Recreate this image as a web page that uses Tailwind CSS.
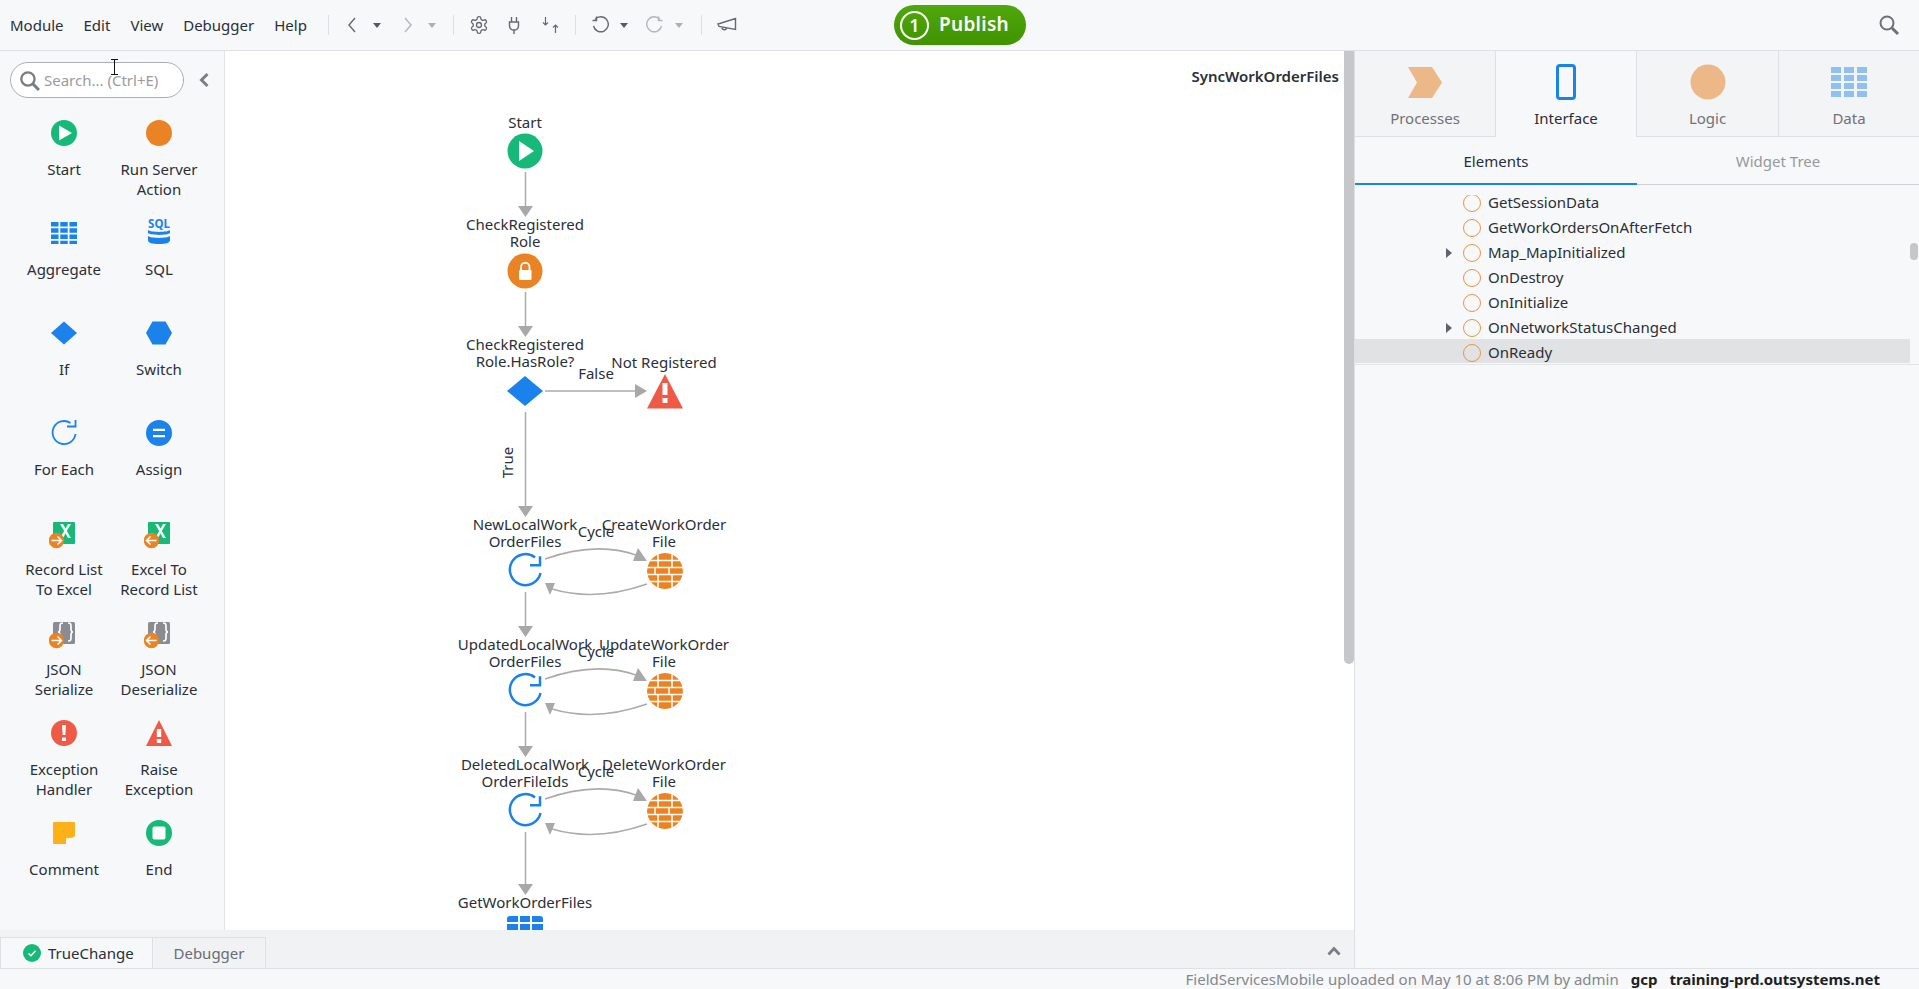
<!DOCTYPE html>
<html lang="en">
<head>
<meta charset="utf-8">
<title>Service Studio</title>
<script src="https://cdn.jsdelivr.net/npm/@tailwindcss/browser@4"></script>
</head>
<body class="font-['Noto_Sans',sans-serif] text-[15px] text-[#2a2f38] overflow-hidden">
<div class="flex flex-col w-[1919px] h-[989px] bg-[#f7f8fa]">

  <!-- top bar -->
  <header class="flex items-center h-[51px] shrink-0 border-b border-[#dfe0e3] pl-[10px] bg-[#f7f8fa]">
    <nav class="flex items-center gap-[20px] w-[318px]">
      <span>Module</span><span>Edit</span><span>View</span><span>Debugger</span><span>Help</span>
    </nav>
    <div class="w-px h-[20px] bg-[#dfe0e3]"></div>
    <svg class="ml-[17px] w-[12px] h-[18px]" viewBox="0 0 12 18" fill="none" stroke="#666a70" stroke-width="1.4"><path d="M9 2 3 9l6 7"/></svg>
    <svg class="ml-[15px] w-[8px] h-[5px]" viewBox="0 0 8 5"><path d="M0 0h8L4 5z" fill="#555a62"/></svg>
    <svg class="ml-[21px] w-[12px] h-[18px]" viewBox="0 0 12 18" fill="none" stroke="#b4b6ba" stroke-width="1.4"><path d="m3 2 6 7-6 7"/></svg>
    <svg class="ml-[14px] w-[8px] h-[5px]" viewBox="0 0 8 5"><path d="M0 0h8L4 5z" fill="#aeb0b4"/></svg>
    <div class="ml-[17px] w-px h-[20px] bg-[#dfe0e3]"></div>
    <svg class="ml-[15px] w-[20px] h-[20px]" viewBox="0 0 24 24" fill="none" stroke="#666a70" stroke-width="1.6"><path d="M12.220 2h-.44a2 2 0 0 0-2 2v.18a2 2 0 0 1-1 1.730l-.43.25a2 2 0 0 1-2 0l-.15-.08a2 2 0 0 0-2.730.73l-.22.38a2 2 0 0 0 .73 2.730l.15.1a2 2 0 0 1 1 1.720v.51a2 2 0 0 1-1 1.740l-.15.09a2 2 0 0 0-.73 2.730l.22.38a2 2 0 0 0 2.730.73l.15-.08a2 2 0 0 1 2 0l.43.25a2 2 0 0 1 1 1.730V20a2 2 0 0 0 2 2h.44a2 2 0 0 0 2-2v-.18a2 2 0 0 1 1-1.730l.43-.25a2 2 0 0 1 2 0l.15.08a2 2 0 0 0 2.730-.73l.22-.39a2 2 0 0 0-.73-2.730l-.15-.08a2 2 0 0 1-1-1.740v-.5a2 2 0 0 1 1-1.740l.15-.09a2 2 0 0 0 .73-2.730l-.22-.38a2 2 0 0 0-2.730-.73l-.15.08a2 2 0 0 1-2 0l-.43-.25a2 2 0 0 1-1-1.730V4a2 2 0 0 0-2-2z"/><circle cx="12" cy="12" r="3"/></svg>
    <svg class="ml-[18px] w-[14px] h-[18px]" viewBox="0 0 14 18" fill="none" stroke="#666a70" stroke-width="1.4"><path d="M4.500 1v5M9.500 1v5M2.500 6h9v4a4 4 0 0 1-4.500 4 4 4 0 0 1-4.500-4zM7 14v4"/></svg>
    <svg class="ml-[21px] w-[18px] h-[18px]" viewBox="0 0 18 18" fill="none" stroke="#666a70" stroke-width="1.2"><path d="M3.500 1v8M1 6.500l2.500 2.500L6 6.500M13.500 17V9M11 11.500 13.500 9l2.500 2.500"/></svg>
    <div class="ml-[15px] w-px h-[20px] bg-[#dfe0e3]"></div>
    <svg class="ml-[15px] w-[18px] h-[18px]" viewBox="0 0 18 18" fill="none" stroke="#666a70" stroke-width="1.4"><path d="M4 3.500A7.500 7.500 0 1 1 2.500 10"/><path d="M5.500 0.500v4h-4"/></svg>
    <svg class="ml-[11px] w-[8px] h-[5px]" viewBox="0 0 8 5"><path d="M0 0h8L4 5z" fill="#555a62"/></svg>
    <svg class="ml-[18px] w-[18px] h-[18px]" viewBox="0 0 18 18" fill="none" stroke="#b4b6ba" stroke-width="1.4"><path d="M14 3.500A7.500 7.500 0 1 0 15.500 10"/><path d="M12.500 0.500v4h4"/></svg>
    <svg class="ml-[11px] w-[8px] h-[5px]" viewBox="0 0 8 5"><path d="M0 0h8L4 5z" fill="#aeb0b4"/></svg>
    <div class="ml-[18px] w-px h-[20px] bg-[#dfe0e3]"></div>
    <svg class="ml-[15px] w-[20px] h-[16px]" viewBox="0 0 20 16" fill="none" stroke="#666a70" stroke-width="1.4"><path d="M18.500 1.500v11L2 9.500 1 7zM5 10.200c0 3 4 3.500 4.500 1"/></svg>
    <button class="ml-[157px] flex items-center w-[132px] h-[40px] rounded-full bg-gradient-to-b from-[#4fa80c] to-[#3f9300] text-white pl-[6px]">
      <span class="flex items-center justify-center w-[29px] h-[29px] rounded-full border-2 border-white text-[18px] font-semibold leading-none">1</span>
      <span class="ml-[10px] pb-[2px] text-[19px] font-semibold leading-none tracking-[0.3px]">Publish</span>
    </button>
    <svg class="ml-auto mr-[19px] w-[22px] h-[22px]" viewBox="0 0 22 22" fill="none" stroke="#6d7076"><circle cx="9" cy="9" r="6.500" stroke-width="2"/><path d="m14 14 6 6" stroke-width="3"/></svg>
  </header>

  <!-- middle -->
  <div class="flex flex-1 min-h-0">
    <div class="flex flex-col w-[1355px] shrink-0 border-r border-[#dfe0e3]">
      <div class="flex flex-1 min-h-0">

        <!-- toolbox -->
        <aside class="w-[225px] shrink-0 border-r border-[#e2e3e6] bg-[#f7f8fa]">
          <div class="relative flex items-center mt-[11px] ml-[10px] h-[36px]">
            <div class="flex items-center w-[174px] h-[36px] rounded-full border border-[#adaeb1] bg-white pl-[8px]">
              <svg class="w-[21px] h-[21px]" viewBox="0 0 20 20" fill="none" stroke="#7b7d82"><circle cx="8.500" cy="8.500" r="6.300" stroke-width="2.200"/><path d="m13 13 6 6" stroke-width="2.800"/></svg>
              <span class="ml-[4px] text-[#9a9b9e]">Search... (Ctrl+E)</span>
            </div>
            <svg class="absolute left-[100px] top-[-3px] w-[9px] h-[16px]" viewBox="0 0 9 16" fill="none" stroke="#111" stroke-width="1"><path d="M1 .500h7M4.500 .500v15M1 15.500h7"/></svg>
            <svg class="ml-[14px] w-[12px] h-[16px]" viewBox="0 0 12 16" fill="none" stroke="#7b7d85" stroke-width="3"><path d="M9.500 2 3.500 8l6 6"/></svg>
          </div>
          <div class="grid grid-cols-[95px_95px] auto-rows-[100px] pl-[16.500px] mt-[18px]">
            <div class="flex flex-col items-center">
              <svg class="w-[26px] h-[34px]" viewBox="-13 -17 26 34"><circle r="13" fill="#17b978"/><path d="M-5-7.500 8 0-5 7.500z" fill="#fff"/></svg>
              <div class="mt-[9px] text-center leading-[20px]">Start</div>
            </div>
            <div class="flex flex-col items-center">
              <svg class="w-[26px] h-[34px]" viewBox="-13 -17 26 34"><circle r="13" fill="#e98324"/></svg>
              <div class="mt-[9px] text-center leading-[20px]">Run Server<br>Action</div>
            </div>
            <div class="flex flex-col items-center">
              <svg class="w-[26px] h-[34px]" viewBox="-13 -17 26 34" fill="#1b82ec"><path d="M-13-11h7.500v4.500H-13zM-3.700-11h7.400v4.500h-7.400zM5.500-11H13v4.500H5.500zM-13-4.700h7.500v4.400H-13zM-3.700-4.700h7.400v4.400h-7.400zM5.500-4.700H13v4.400H5.500zM-13 1.500h7.500v4.400H-13zM-3.700 1.500h7.400v4.400h-7.400zM5.500 1.500H13v4.400H5.500zM-13 7.700h7.500v3.300H-13zM-3.700 7.700h7.400v3.300h-7.400zM5.500 7.700H13v3.300H5.500z"/></svg>
              <div class="mt-[9px] text-center leading-[20px]">Aggregate</div>
            </div>
            <div class="flex flex-col items-center">
              <svg class="w-[26px] h-[34px]" viewBox="-13 -17 26 34" fill="#1b82ec"><text x="0" y="-5" text-anchor="middle" font-size="11.500" font-weight="700" font-family="Noto Sans">SQL</text><path d="M-11-3c3 2.500 19 2.500 22 0v3c-3 2.500-19 2.500-22 0zM-11 3c3 2.500 19 2.500 22 0v4c0 3-4 4-11 4S-11 10-11 7z"/></svg>
              <div class="mt-[9px] text-center leading-[20px]">SQL</div>
            </div>
            <div class="flex flex-col items-center">
              <svg class="w-[26px] h-[34px]" viewBox="-13 -17 26 34"><path d="M-13 0 0-11.500 13 0 0 11.500z" fill="#1b82ec"/></svg>
              <div class="mt-[9px] text-center leading-[20px]">If</div>
            </div>
            <div class="flex flex-col items-center">
              <svg class="w-[26px] h-[34px]" viewBox="-13 -17 26 34"><path d="M-13 0-6.500-11.500h13L13 0 6.500 11.500h-13z" fill="#1b82ec"/></svg>
              <div class="mt-[9px] text-center leading-[20px]">Switch</div>
            </div>
            <div class="flex flex-col items-center">
              <svg class="w-[26px] h-[34px]" viewBox="-13 -17 26 34" fill="none" stroke="#1b82ec" stroke-width="1.800"><path d="M11.500 1A11.500 11.500 0 1 1 6.500-10"/><path d="M3-6.500h8.500V-13"/></svg>
              <div class="mt-[9px] text-center leading-[20px]">For Each</div>
            </div>
            <div class="flex flex-col items-center">
              <svg class="w-[26px] h-[34px]" viewBox="-13 -17 26 34"><circle r="13" fill="#1b82ec"/><path d="M-6-4.200H6V-2H-6zM-6 2H6v2.200H-6z" fill="#fff"/></svg>
              <div class="mt-[9px] text-center leading-[20px]">Assign</div>
            </div>
            <div class="flex flex-col items-center">
              <svg class="w-[30px] h-[34px]" viewBox="-15 -17 30 34"><rect x="-11" y="-11" width="22" height="22" rx="1" fill="#17b978"/><path d="m-4-9 4.200 7L-4 5h3l2.500-4.500L4 5h3L2.800-2 7-9H4L1.500-4.500-1-9z" fill="#f3fbf7"/><circle cx="-7.500" cy="7.500" r="7.700" fill="#e98324"/><path d="M-12.500 7.500h9.500M-6.500 3.500l4 4-4 4" fill="none" stroke="#fff" stroke-width="1.500"/></svg>
              <div class="mt-[9px] text-center leading-[20px]">Record List<br>To Excel</div>
            </div>
            <div class="flex flex-col items-center">
              <svg class="w-[30px] h-[34px]" viewBox="-15 -17 30 34"><rect x="-11" y="-11" width="22" height="22" rx="1" fill="#17b978"/><path d="m-4-9 4.200 7L-4 5h3l2.500-4.500L4 5h3L2.800-2 7-9H4L1.500-4.500-1-9z" fill="#f3fbf7"/><circle cx="-7.500" cy="7.500" r="7.700" fill="#e98324"/><path d="M-2.500 7.500H-12M-8.500 3.500l-4 4 4 4" fill="none" stroke="#fff" stroke-width="1.500"/></svg>
              <div class="mt-[9px] text-center leading-[20px]">Excel To<br>Record List</div>
            </div>
            <div class="flex flex-col items-center">
              <svg class="w-[30px] h-[34px]" viewBox="-15 -17 30 34"><rect x="-11" y="-11" width="22" height="22" rx="1.500" fill="#8b8c93"/><path d="M-1-10c-3 0-3 1-3 4v2c0 2-1 3-2 3 1 0 2 1 2 3v2c0 3 0 4 3 4M4-10c3 0 3 1 3 4v2c0 2 1 3 2 3-1 0-2 1-2 3v2c0 3 0 4-3 4" fill="none" stroke="#fff" stroke-width="1.700"/><circle cx="-7.500" cy="7.500" r="7.700" fill="#e98324"/><path d="M-12.500 7.500h9.500M-6.500 3.500l4 4-4 4" fill="none" stroke="#fff" stroke-width="1.500"/></svg>
              <div class="mt-[9px] text-center leading-[20px]">JSON<br>Serialize</div>
            </div>
            <div class="flex flex-col items-center">
              <svg class="w-[30px] h-[34px]" viewBox="-15 -17 30 34"><rect x="-11" y="-11" width="22" height="22" rx="1.500" fill="#8b8c93"/><path d="M-1-10c-3 0-3 1-3 4v2c0 2-1 3-2 3 1 0 2 1 2 3v2c0 3 0 4 3 4M4-10c3 0 3 1 3 4v2c0 2 1 3 2 3-1 0-2 1-2 3v2c0 3 0 4-3 4" fill="none" stroke="#fff" stroke-width="1.700"/><circle cx="-7.500" cy="7.500" r="7.700" fill="#e98324"/><path d="M-2.500 7.500H-12M-8.500 3.500l-4 4 4 4" fill="none" stroke="#fff" stroke-width="1.500"/></svg>
              <div class="mt-[9px] text-center leading-[20px]">JSON<br>Deserialize</div>
            </div>
            <div class="flex flex-col items-center">
              <svg class="w-[26px] h-[34px]" viewBox="-13 -17 26 34"><circle r="13" fill="#ee5a45"/><path d="M-2-8H2L1.300 2h-2.600zM-2 4.500H2V8H-2z" fill="#fff"/></svg>
              <div class="mt-[9px] text-center leading-[20px]">Exception<br>Handler</div>
            </div>
            <div class="flex flex-col items-center">
              <svg class="w-[26px] h-[34px]" viewBox="-13 -17 26 34"><path d="M0-13 13 13H-13z" fill="#ee5a45"/><path d="M-2.200-4H2.200V4H-2.200zM-2.200 6H2.200V10H-2.200z" fill="#fff"/></svg>
              <div class="mt-[9px] text-center leading-[20px]">Raise<br>Exception</div>
            </div>
            <div class="flex flex-col items-center">
              <svg class="w-[26px] h-[34px]" viewBox="-13 -17 26 34"><rect x="-11" y="-11" width="22" height="22" rx="1" fill="#fbb117"/><path d="M11 11H2L11 3z" fill="#f7f8fa"/><path d="M2 11V5.500L9.500 4.500z" fill="#fff"/></svg>
              <div class="mt-[9px] text-center leading-[20px]">Comment</div>
            </div>
            <div class="flex flex-col items-center">
              <svg class="w-[26px] h-[34px]" viewBox="-13 -17 26 34"><circle r="13" fill="#17b978"/><rect x="-6.500" y="-6.500" width="13" height="13" rx="2" fill="#fff"/></svg>
              <div class="mt-[9px] text-center leading-[20px]">End</div>
            </div>
          </div>
        </aside>

        <!-- canvas -->
        <main class="relative flex-1 min-w-0 bg-white overflow-hidden">
          <div class="absolute right-[15px] top-[15px] font-semibold leading-[20px]">SyncWorkOrderFiles</div>
          <div class="absolute right-0 top-0 w-[10px] h-[613px] rounded-b-[5px] bg-[#c6c7c9]"></div>

          <svg class="absolute left-0 top-0 w-[1129px] h-[879px]" viewBox="225 51 1129 879">
            <defs>
              <clipPath id="g"><circle cx="665" cy="571" r="18"/></clipPath>
            </defs>
            <g stroke="#ababab" stroke-width="1.500" fill="none">
              <path d="M525.500 172V208M525.500 292V328M525.500 412V506M525.500 592V626M525.500 712V746M525.500 832V884M545 391H636"/>
            </g>
            <g fill="#a8a8a8">
              <path d="M518 206h15l-7.500 11zM518 326h15l-7.500 11zM518 506h15l-7.500 11zM518 626h15l-7.500 11zM518 746h15l-7.500 11zM518 884h15l-7.500 11zM635 384l12 7-12 7z"/>
            </g>
            <circle cx="525" cy="151" r="17.500" fill="#17b978"/>
            <path d="M519 141l15 10-15 10z" fill="#fff"/>
            <circle cx="525" cy="271" r="17.500" fill="#e98324"/>
            <rect x="519" y="270" width="12.500" height="10" rx="1" fill="#fff"/>
            <path d="M521 270v-3a4.200 4.200 0 0 1 8.500 0v3" fill="none" stroke="#fff" stroke-width="1.800"/>
            <path d="M507 391 525 376 543 391 525 406z" fill="#1b82ec"/>
            <path d="M665 374 683 408.500H647z" fill="#ee5a45"/>
            <path d="M662.500 383h5v12h-5zM662.500 398h5v5h-5z" fill="#fff"/>
            <g id="l1">
              <g fill="none" stroke="#1b82ec" stroke-width="2.500">
                <path d="M540.500 573A15.500 15.500 0 1 1 535 557.500"/>
                <path d="M530 565.300h10v-9"/>
              </g>
              <path d="M545 559Q596 541 636 555M647 584Q596 602 552 589" fill="none" stroke="#ababab" stroke-width="1.500"/>
              <path d="M638 548 647 561 633 561zM545 583 555 583 550 595z" fill="#a8a8a8"/>
              <g clip-path="url(#g)">
                <circle cx="665" cy="571" r="18" fill="#e98324"/>
                <path d="M647 560.500h36M647 567.500h36M647 574.500h36M647 581.500h36M658 553v7.500M672 553v7.500M658 560.500v7M672 560.500v7M655 567.500v7M669 567.500v7M658 574.500v7M672 574.500v7M658 581.500v8M672 581.500v8" stroke="#fff" stroke-width="1.500" fill="none"/>
              </g>
            </g>
            <use href="#l1" y="120"/>
            <use href="#l1" y="240"/>
            <g fill="#1b82ec">
              <path d="M507 922v-3a3 3 0 0 1 3-3h8v6zM520 916h10v6h-10zM532 916h8a3 3 0 0 1 3 3v3h-11zM507 924h11v6h-11zM520 924h10v6h-10zM532 924h11v6h-11z"/>
            </g>
          </svg>

          <div class="absolute left-[200px] top-[63px] w-[200px] text-center leading-[17px]">Start</div>
          <div class="absolute left-[200px] top-[165px] w-[200px] text-center leading-[17px]">CheckRegistered<br>Role</div>
          <div class="absolute left-[200px] top-[285px] w-[200px] text-center leading-[17px]">CheckRegistered<br>Role.HasRole?</div>
          <div class="absolute left-[271px] top-[314px] w-[200px] text-center leading-[17px]">False</div>
          <div class="absolute left-[339px] top-[303px] w-[200px] text-center leading-[17px]">Not Registered</div>
          <div class="absolute left-[182px] top-[403px] w-[200px] text-center leading-[17px] -rotate-90">True</div>
          <div class="absolute left-[200px] top-[465px] w-[200px] text-center leading-[17px]">NewLocalWork<br>OrderFiles</div>
          <div class="absolute left-[271px] top-[472px] w-[200px] text-center leading-[17px]">Cycle</div>
          <div class="absolute left-[339px] top-[465px] w-[200px] text-center leading-[17px]">CreateWorkOrder<br>File</div>
          <div class="absolute left-[200px] top-[585px] w-[200px] text-center leading-[17px]">UpdatedLocalWork<br>OrderFiles</div>
          <div class="absolute left-[271px] top-[592px] w-[200px] text-center leading-[17px]">Cycle</div>
          <div class="absolute left-[339px] top-[585px] w-[200px] text-center leading-[17px]">UpdateWorkOrder<br>File</div>
          <div class="absolute left-[200px] top-[705px] w-[200px] text-center leading-[17px]">DeletedLocalWork<br>OrderFileIds</div>
          <div class="absolute left-[271px] top-[712px] w-[200px] text-center leading-[17px]">Cycle</div>
          <div class="absolute left-[339px] top-[705px] w-[200px] text-center leading-[17px]">DeleteWorkOrder<br>File</div>
          <div class="absolute left-[200px] top-[843px] w-[200px] text-center leading-[17px]">GetWorkOrderFiles</div>
        </main>
      </div>

      <!-- bottom tabs -->
      <div class="flex items-end justify-between h-[38px] shrink-0 bg-[#f1f2f4]">
        <div class="flex h-[31px]">
          <div class="flex items-center w-[153px] pl-[22px] bg-[#f7f8fa] border border-b-0 border-[#dfe0e3]">
            <svg class="w-[18px] h-[18px]" viewBox="0 0 18 18"><circle cx="9" cy="9" r="9" fill="#17b978"/><path d="m5.500 9.500 2.500 2.300 4.500-5" fill="none" stroke="#fff" stroke-width="1.500"/></svg>
            <span class="ml-[7px]">TrueChange</span>
          </div>
          <div class="flex items-center justify-center w-[113px] border-t border-r border-[#dfe0e3] text-[#6a6d73]">Debugger</div>
        </div>
        <svg class="mb-[12px] mr-[13px] w-[14px] h-[10px]" viewBox="0 0 14 10" fill="none" stroke="#7b7d85" stroke-width="2.800"><path d="m1.500 8.500 5.500-6 5.500 6"/></svg>
      </div>
    </div>

    <!-- right panel -->
    <section class="relative flex-1 min-w-0 bg-[#f7f8fa]">
      <div class="flex h-[86px]">
        <div class="flex flex-col items-center w-[141px] border-b border-r border-[#dfe0e3] bg-[#f3f4f6] text-[#6f7278]">
          <svg class="mt-[16px] w-[34px] h-[31px]" viewBox="0 0 34 31"><path d="M0 0h24l10 15.500L24 31H0l9-15.500z" fill="#edb888"/></svg>
          <span class="mt-[10px] leading-[20px]">Processes</span>
        </div>
        <div class="flex flex-col items-center w-[141px] border-r border-[#dfe0e3]">
          <svg class="mt-[13px] w-[20px] h-[36px]" viewBox="0 0 20 36"><rect x="1.500" y="1.500" width="17" height="33" rx="2.500" fill="none" stroke="#1b82ec" stroke-width="3"/></svg>
          <span class="mt-[8px] leading-[20px]">Interface</span>
        </div>
        <div class="flex flex-col items-center w-[142px] border-b border-r border-[#dfe0e3] bg-[#f3f4f6] text-[#6f7278]">
          <svg class="mt-[13px] w-[36px] h-[36px]" viewBox="0 0 36 36"><circle cx="18" cy="18" r="17.500" fill="#edb888"/></svg>
          <span class="mt-[8px] leading-[20px]">Logic</span>
        </div>
        <div class="flex flex-col items-center flex-1 border-b border-[#dfe0e3] bg-[#f3f4f6] text-[#6f7278]">
          <svg class="mt-[16px] w-[36px] h-[30px]" viewBox="0 0 36 30" fill="#8fc0ef"><path d="M0 0h10v6H0zM13 0h10v6H13zM26 0h10v6H26zM0 8h10v6H0zM13 8h10v6H13zM26 8h10v6H26zM0 16h10v6H0zM13 16h10v6H13zM26 16h10v6H26zM0 24h10v6H0zM13 24h10v6H13zM26 24h10v6H26z"/></svg>
          <span class="mt-[11px] leading-[20px]">Data</span>
        </div>
      </div>
      <div class="flex h-[48px]">
        <div class="flex items-center justify-center w-[282px] pt-[2px] border-b-[2px] border-[#1b82ec]">Elements</div>
        <div class="flex items-center justify-center flex-1 pt-[2px] border-b border-[#cfd0d3] text-[#96989c]">Widget Tree</div>
      </div>
      <div class="mt-[10px] w-[555px] h-[168px] overflow-hidden">
        <div class="mt-[-5px]">
          <div class="flex items-center h-[25px]"><span class="ml-[90px] w-[8px]"></span><span class="ml-[10px] w-[18px] h-[18px] rounded-full border-[1.500px] border-[#ec9340]"></span><span class="ml-[7px]">GetSessionData</span></div>
          <div class="flex items-center h-[25px]"><span class="ml-[90px] w-[8px]"></span><span class="ml-[10px] w-[18px] h-[18px] rounded-full border-[1.500px] border-[#ec9340]"></span><span class="ml-[7px]">GetWorkOrdersOnAfterFetch</span></div>
          <div class="flex items-center h-[25px]"><svg class="ml-[90px] w-[8px] h-[10px]" viewBox="0 0 8 10"><path d="M1 0l6 5-6 5z" fill="#5f636b"/></svg><span class="ml-[10px] w-[18px] h-[18px] rounded-full border-[1.500px] border-[#ec9340]"></span><span class="ml-[7px]">Map_MapInitialized</span></div>
          <div class="flex items-center h-[25px]"><span class="ml-[90px] w-[8px]"></span><span class="ml-[10px] w-[18px] h-[18px] rounded-full border-[1.500px] border-[#ec9340]"></span><span class="ml-[7px]">OnDestroy</span></div>
          <div class="flex items-center h-[25px]"><span class="ml-[90px] w-[8px]"></span><span class="ml-[10px] w-[18px] h-[18px] rounded-full border-[1.500px] border-[#ec9340]"></span><span class="ml-[7px]">OnInitialize</span></div>
          <div class="flex items-center h-[25px]"><svg class="ml-[90px] w-[8px] h-[10px]" viewBox="0 0 8 10"><path d="M1 0l6 5-6 5z" fill="#5f636b"/></svg><span class="ml-[10px] w-[18px] h-[18px] rounded-full border-[1.500px] border-[#ec9340]"></span><span class="ml-[7px]">OnNetworkStatusChanged</span></div>
          <div class="flex items-center h-[25px] bg-[#e1e2e4] shadow-[0_-1px_0_#e1e2e4]"><span class="ml-[90px] w-[8px]"></span><span class="ml-[10px] w-[18px] h-[18px] rounded-full border-[1.500px] border-[#ec9340]"></span><span class="ml-[7px]">OnReady</span></div>
        </div>
      </div>
      <div class="mt-[1px] h-px bg-[#e3e4e6]"></div>
      <div class="absolute left-[555px] top-[192px] w-[8px] h-[17px] rounded-[4px] bg-[#c6c7c9]"></div>
    </section>
  </div>

  <!-- status bar -->
  <footer class="flex items-center justify-end h-[21px] shrink-0 border-t border-[#dfe0e3] pr-[39px] leading-none bg-[#f7f8fa]">
    <span class="text-[#85878c]">FieldServicesMobile uploaded on May 10 at 8:06 PM by admin</span>
    <span class="ml-[12px] font-bold text-[#1c1f24]">gcp</span>
    <span class="ml-[12px] font-bold text-[#1c1f24]">training-prd.outsystems.net</span>
  </footer>
</div>
</body>
</html>
